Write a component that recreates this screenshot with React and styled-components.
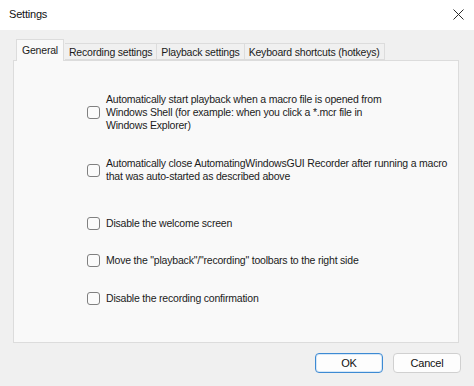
import React from 'react';
import styled, { createGlobalStyle } from 'styled-components';

const GlobalStyle = createGlobalStyle`
  *, *::before, *::after { box-sizing: border-box; }
  html, body {
    margin: 0;
    padding: 0;
    background: #f0f0f0;
  }
  body {
    font-family: "Liberation Sans", Arial, sans-serif;
    font-size: 10.5px;
    letter-spacing: -0.2px;
    color: #1b1b1b;
  }
`;

const Window = styled.div`
  width: 474px;
  height: 386px;
  display: flex;
  flex-direction: column;
  background: #f0f0f0;
  overflow: hidden;
`;

const TitleBar = styled.div`
  flex-shrink: 0;
  height: 30px;
  background: #fff;
  display: flex;
  align-items: center;
  justify-content: space-between;
  padding: 0 10px 2px 9px;
  font-size: 11px;
  color: #111;
`;

const CloseIcon = styled.svg`
  display: block;
`;

const Body = styled.div`
  flex: 1;
  display: flex;
  flex-direction: column;
  padding: 9px 15px 0 13px;
`;

const TabStrip = styled.div`
  flex-shrink: 0;
  display: flex;
  align-items: flex-end;
  height: 21px;
  padding-left: 3px;
  position: relative;
  z-index: 1;
`;

const Tab = styled.div`
  height: ${p => (p.$active ? '22px' : '17px')};
  margin-bottom: ${p => (p.$active ? '-1px' : '0')};
  padding: ${p => (p.$active ? '0 5px 2px' : '0 4px')};
  display: flex;
  align-items: center;
  background: ${p => (p.$active ? '#f9f9f9' : '#f0f0f0')};
  border: 1px solid #dcdcdc;
  border-bottom: ${p => (p.$active ? 'none' : '1px solid #dcdcdc')};
  border-left-width: ${p => (p.$active ? '1px' : '0')};
  margin-right: ${p => (p.$active ? '1px' : '0')};
  white-space: nowrap;
`;

const Panel = styled.div`
  flex-shrink: 0;
  height: 283px;
  background: #f9f9f9;
  border: 1px solid #dcdcdc;
  display: flex;
  flex-direction: column;
  padding: 32px 0 0 73px;
`;

const Option = styled.label`
  display: flex;
  align-items: center;
  gap: 6px;
  margin-top: ${p => p.$gap}px;
  line-height: 13px;
`;

const Box = styled.span`
  width: 13px;
  height: 13px;
  border: 1px solid #808080;
  border-radius: 3px;
  background: #fbfbfb;
  flex-shrink: 0;
`;

const OptionText = styled.span`
  white-space: nowrap;
`;

const Footer = styled.div`
  display: flex;
  justify-content: flex-end;
  gap: 10px;
  padding: 10px 0 0;
  margin-right: -2px;
`;

const Button = styled.button`
  width: 68px;
  height: 20px;
  font-family: inherit;
  font-size: 11px;
  letter-spacing: -0.2px;
  color: #111;
  background: #fdfdfd;
  border: 1px solid ${p => (p.$primary ? '#3d8ad3' : '#d0d0d0')};
  border-radius: 4px;
  box-shadow: ${p => (p.$primary ? 'inset 0 0 0 1px #d6e7f7' : 'none')};
  padding: 0;
`;

const tabs = ['General', 'Recording settings', 'Playback settings', 'Keyboard shortcuts (hotkeys)'];

const options = [
  {
    lines: [
      'Automatically start playback when a macro file is opened from',
      'Windows Shell (for example: when you click a *.mcr file in',
      'Windows Explorer)',
    ],
    gap: 0,
  },
  {
    lines: [
      'Automatically close AutomatingWindowsGUI Recorder after running a macro',
      'that was auto-started as described above',
    ],
    gap: 25,
  },
  { lines: ['Disable the welcome screen'], gap: 34 },
  { lines: ['Move the "playback"/"recording" toolbars to the right side'], gap: 24 },
  { lines: ['Disable the recording confirmation'], gap: 25 },
];

export default function App() {
  return (
    <Window>
      <GlobalStyle />
      <TitleBar>
        <span>Settings</span>
        <CloseIcon width="11" height="11" viewBox="0 0 11 11">
          <path d="M0.5 0.5 L10.5 10.5 M10.5 0.5 L0.5 10.5" stroke="#2a2a2a" strokeWidth="1" />
        </CloseIcon>
      </TitleBar>
      <Body>
        <TabStrip>
          {tabs.map((t, i) => (
            <Tab key={t} $active={i === 0}>
              {t}
            </Tab>
          ))}
        </TabStrip>
        <Panel>
          {options.map(o => (
            <Option key={o.lines[0]} $gap={o.gap}>
              <Box />
              <OptionText>
                {o.lines.map((l, i) => (
                  <React.Fragment key={i}>
                    {i > 0 && <br />}
                    {l}
                  </React.Fragment>
                ))}
              </OptionText>
            </Option>
          ))}
        </Panel>
        <Footer>
          <Button $primary>OK</Button>
          <Button>Cancel</Button>
        </Footer>
      </Body>
    </Window>
  );
}
